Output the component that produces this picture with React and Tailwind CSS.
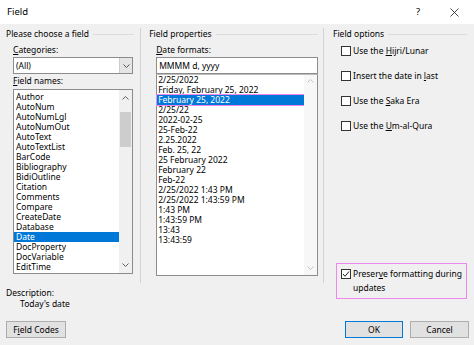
import React from "react";

const fieldNames = [
  "Author",
  "AutoNum",
  "AutoNumLgl",
  "AutoNumOut",
  "AutoText",
  "AutoTextList",
  "BarCode",
  "Bibliography",
  "BidiOutline",
  "Citation",
  "Comments",
  "Compare",
  "CreateDate",
  "Database",
  "Date",
  "DocProperty",
  "DocVariable",
  "EditTime",
];

const formats = [
  "2/25/2022",
  "Friday, February 25, 2022",
  "February 25, 2022",
  "2/25/22",
  "2022-02-25",
  "25-Feb-22",
  "2.25.2022",
  "Feb. 25, 22",
  "25 February 2022",
  "February 22",
  "Feb-22",
  "2/25/2022 1:43 PM",
  "2/25/2022 1:43:59 PM",
  "1:43 PM",
  "1:43:59 PM",
  "13:43",
  "13:43:59",
];

const Chevron = ({ up, color = "#606060" }) => (
  <svg width="7" height="4" viewBox="0 0 7 4">
    <polyline
      points={up ? "0.5,3.5 3.5,0.5 6.5,3.5" : "0.5,0.5 3.5,3.5 6.5,0.5"}
      fill="none"
      stroke={color}
      strokeWidth="1"
    />
  </svg>
);

const Box = ({ checked }) => (
  <span className="w-[10px] h-[10px] border border-[#333] bg-white flex items-center justify-center shrink-0">
    {checked && (
      <svg width="8" height="8" viewBox="0 0 8 8">
        <polyline points="1,4 3,6.3 7,1.5" fill="none" stroke="#222" strokeWidth="1" />
      </svg>
    )}
  </span>
);

const Header = ({ title }) => (
  <div className="flex items-center h-[12px] gap-[4px]">
    <span>{title}</span>
    <span className="flex-1 h-px bg-[#dcdcdc]" />
  </div>
);

const Option = ({ children }) => (
  <div className="flex items-center h-[12px] gap-[2px]">
    <Box />
    <span>{children}</span>
  </div>
);

export default function App() {
  return (
    <div className="w-[474px] h-[345px] bg-[#f0f0f0] text-black overflow-hidden flex flex-col font-['Noto_Sans',sans-serif] text-[8.5px] leading-[12px]">
      {/* title bar */}
      <div className="h-[24px] bg-white flex items-center pl-[7px] shrink-0">
        <span className="text-[9.5px] flex-1">Field</span>
        <span className="w-[14px] text-center text-[9.5px] mr-[25px]">?</span>
        <svg width="9" height="9" viewBox="0 0 9 9" className="mr-[15px]">
          <path d="M0.5 0.5 L8.5 8.5 M8.5 0.5 L0.5 8.5" stroke="#333" strokeWidth="0.9" />
        </svg>
      </div>

      <div className="flex mt-[4px] h-[282px] shrink-0">
        {/* left */}
        <div className="w-[141px] pl-[6px] pr-[6px] flex flex-col">
          <Header title="Please choose a field" />
          <div className="pl-[7px] pr-[1px] flex flex-col">
            <div className="mt-[4px] h-[12px]">
              <span className="underline">C</span>ategories:
            </div>
            <div className="mt-[1px] h-[17px] border border-[#8c8c8c] bg-white flex">
              <span className="flex-1 pl-[2px] leading-[15px]">(All)</span>
              <span className="w-[13px] bg-[#e5e5e5] border-l border-[#cccccc] flex items-center justify-center">
                <Chevron color="#555" />
              </span>
            </div>
            <div className="mt-[1px] h-[12px]">
              <span className="underline">F</span>ield names:
            </div>
            <div className="mt-[2px] h-[185px] border border-[#8c8c8c] bg-white flex">
              <div className="flex-1 pt-[2px] flex flex-col">
                {fieldNames.map((n) => (
                  <div
                    key={n}
                    className={
                      "h-[10px] leading-[10px] pl-[2px] whitespace-nowrap " +
                      (n === "Date" ? "bg-[#0078d7] text-white" : "")
                    }
                  >
                    {n}
                  </div>
                ))}
              </div>
              <div className="w-[13px] flex flex-col bg-[#f0f0f0]">
                <div className="h-[16px] flex items-center justify-center">
                  <Chevron up />
                </div>
                <div className="mt-[6px] h-[35px] mx-[1px] bg-[#cdcdcd]" />
                <div className="flex-1" />
                <div className="h-[16px] flex items-center justify-center">
                  <Chevron />
                </div>
              </div>
            </div>
          </div>
          <div className="mt-[13px] leading-[11px]">Description:</div>
          <div className="pl-[14px] leading-[11px]">Today's date</div>
        </div>

        <div className="w-px h-[255px] bg-[#d3d3d3]" />

        {/* middle */}
        <div className="w-[183px] pl-[8px] pr-[5px] flex flex-col">
          <Header title="Field properties" />
          <div className="pl-[7px] flex flex-col">
            <div className="mt-[4px] h-[12px]">
              <span className="underline">D</span>ate formats:
            </div>
            <div className="mt-[1px] h-[17px] border border-[#8c8c8c] bg-white pl-[2px] leading-[15px]">
              MMMM d, yyyy
            </div>
            <div className="h-[202px] border border-[#8c8c8c] border-t-[#bdbdbd] bg-white flex">
              <div className="flex-1 flex flex-col">
                {formats.map((f) => (
                  <div
                    key={f}
                    className={
                      "h-[10px] leading-[10px] pl-[1px] whitespace-nowrap " +
                      (f === "February 25, 2022"
                        ? "bg-[#0078d7] text-white ring-1 ring-[#ee88ee]"
                        : "")
                    }
                  >
                    {f}
                  </div>
                ))}
              </div>
              <div className="w-[13px] flex flex-col bg-[#f7f7f7]">
                <div className="h-[12px] flex items-center justify-center">
                  <Chevron up color="#c4c4c4" />
                </div>
                <div className="flex-1" />
                <div className="h-[12px] mb-[1px] flex items-center justify-center">
                  <Chevron color="#c4c4c4" />
                </div>
              </div>
            </div>
          </div>
        </div>

        <div className="w-px h-[255px] bg-[#d3d3d3]" />

        {/* right */}
        <div className="flex-1 pl-[9px] pr-[7px] flex flex-col">
          <Header title="Field options" />
          <div className="pl-[8px] mt-[5px] flex flex-col gap-[13px]">
            <Option>
              Use the <span className="underline">H</span>ijri/Lunar
            </Option>
            <Option>
              Insert the date in <span className="underline">l</span>ast
            </Option>
            <Option>
              Use the <span className="underline">S</span>aka Era
            </Option>
            <Option>
              Use the <span className="underline">U</span>m-al-Qura
            </Option>
          </div>
          <div className="ml-[3px] mt-[131px] w-[131px] h-[36px] border border-[#ee88ee] pl-[4px] pt-[3px] flex items-start gap-[2px]">
            <span className="mt-[2px]">
              <Box checked />
            </span>
            <span className="leading-[14px] whitespace-nowrap">
              Preser<span className="underline">v</span>e formatting during
              <br />
              updates
            </span>
          </div>
        </div>
      </div>

      {/* buttons */}
      <div className="flex mt-[11px] pl-[6px] pr-[5px]">
        <button className="w-[60px] h-[17px] bg-[#e1e1e1] border border-[#adadad] leading-[15px] text-center">
          F<span className="underline">i</span>eld Codes
        </button>
        <div className="flex-1" />
        <button className="w-[58px] h-[17px] bg-[#e1e1e1] border border-[#0078d7] leading-[15px] text-center">
          OK
        </button>
        <button className="ml-[7px] w-[59px] h-[17px] bg-[#e1e1e1] border border-[#adadad] leading-[15px] text-center">
          Cancel
        </button>
      </div>
    </div>
  );
}
